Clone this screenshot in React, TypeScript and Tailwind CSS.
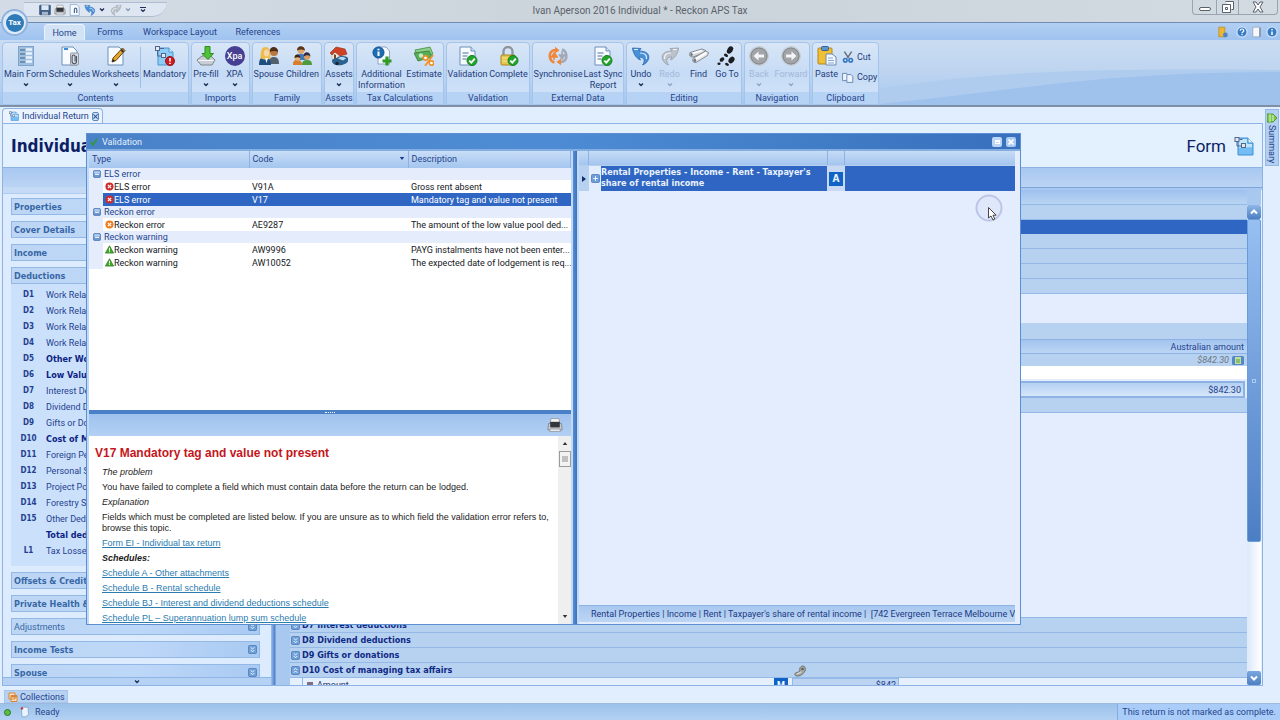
import { ReactNode } from "react";
import clsx from "clsx";

const boldFont = "font-['DejaVu_Sans_Condensed','Noto_Sans',sans-serif] font-bold";

// ---------- icons ----------

function Svg({ size = "size-5", children }: { size?: string; children: ReactNode }) {
  return (
    <svg viewBox="0 0 20 20" className={clsx(size, "shrink-0")} fill="none" aria-hidden="true">
      {children}
    </svg>
  );
}

const Page = () => <path d="M2 1h11l4 4v14H2z" fill="#f7fbff" stroke="#6d8fb8" />;

const Tick = () => (
  <>
    <circle cx="14" cy="14.5" r="5" fill="#23a52c" stroke="#15801e" />
    <path d="M11.3 14.6l2 2 3.5-4" stroke="#fff" strokeWidth="1.8" />
  </>
);

const MainFormIcon = () => (
  <Svg>
    <rect x="2.500" y=".5" width="15" height="19" fill="#9fbfe0" stroke="#7fa3cb" />
    <path d="M4 4h5M4 8h5M4 12h5M4 16h5" stroke="#40607f" strokeWidth="1.200" />
    <path d="M10 3.500h6M10 7.500h6M10 11.500h6M10 15.500h6" stroke="#e9f4ff" strokeWidth="2.500" />
  </Svg>
);
const SchedulesIcon = () => (
  <Svg>
    <Page />
    <path d="M4 3h4" stroke="#3c8bd6" strokeWidth="2" />
    <rect x="10.500" y="7" width="8" height="12" rx="1" fill="#d7dce2" stroke="#8f98a3" />
    <path d="M16.500 10v5.500a2.200 2.200 0 01-4.400 0V10.500a1.500 1.500 0 013 0v5" stroke="#4d5661" strokeWidth="1.100" />
  </Svg>
);
const WorksheetsIcon = () => (
  <Svg>
    <Page />
    <path d="M6 16l1-4L16.500 2l2.500 2.500L10 14.500z" fill="#e2a32b" stroke="#6a4510" />
    <path d="M6 16l1-3 2 2z" fill="#222" />
    <path d="M15 3.500L17.500 6" stroke="#333" strokeWidth="2" />
  </Svg>
);
const MandatoryIcon = () => (
  <Svg>
    <path d="M3 2h11l4 4v13H3z" fill="#8ccdf7" stroke="#4a93cf" />
    <path d="M14 2v4h4" fill="#e5f5ff" stroke="#4a93cf" />
    <rect x=".5" y=".5" width="4" height="4" fill="#dfe9f5" stroke="#53698a" />
    <path d="M2.500 5v5h4M5 2.500h4" stroke="#53698a" />
    <rect x="6.500" y="7.500" width="4" height="4" fill="#dfe9f5" stroke="#53698a" />
    <circle cx="15" cy="15" r="4.500" fill="#cf1b22" stroke="#9d1016" />
    <path d="M15 12v3.500M15 16.700v1.300" stroke="#fff" strokeWidth="1.600" />
  </Svg>
);
const PrefillIcon = () => (
  <Svg>
    <path d="M1 14l5-4h9l4 4-3 5H5z" fill="#c9ced4" stroke="#7e858e" />
    <path d="M2 14.500h16" stroke="#f3f5f7" />
    <path d="M9 .5h5v7h3.500L12 13.500 6 7.500h3z" fill="#4fc335" stroke="#2f8b1f" />
  </Svg>
);
const SpouseIcon = () => (
  <Svg>
    <path d="M10 18c0-5 1-7 5-7s5 3 5 7z" fill="#55606e" />
    <circle cx="15" cy="6" r="4" fill="#b87842" />
    <path d="M10.500 6c0-7 9-6 8.500 0C17 4.500 14 4.500 10.500 6z" fill="#4b2d18" />
    <path d="M0 19c0-6 2-8 6-8s6 3 6 8z" fill="#1e4f80" />
    <path d="M1.500 12C1.500 4 3 1 6.500 1s5 3 5 11c-3 2-7 2-10 0z" fill="#edbc4b" />
    <ellipse cx="7.500" cy="7" rx="2.600" ry="3.600" fill="#f7d6ad" />
    <path d="M6 12l1.500 5L9 12z" fill="#fff" />
  </Svg>
);
const ChildrenIcon = () => (
  <Svg>
    <path d="M2 13c0-4 2-5 6-5s5 2 5 6H2z" fill="#3b78bd" />
    <circle cx="8" cy="4.500" r="3.500" fill="#dba46c" />
    <path d="M4 4.500c0-6 8-5 8 0C9 3 7 3 4 4.500z" fill="#5a3413" />
    <path d="M0 19c0-4 1-5 4-5s5 1 5 5z" fill="#d87d2a" />
    <circle cx="4.500" cy="12" r="2.800" fill="#e6b37c" />
    <path d="M1.500 12c0-5 6-4 6 0-2-1-4-1-6 0z" fill="#3b2410" />
    <path d="M9 19c0-4 2-5 5-5s5 1 5 5z" fill="#4f9b3b" />
    <circle cx="14" cy="10.500" r="3.200" fill="#d99c60" />
    <path d="M10.500 10.500c0-6 7-5 7 0-3-2-4-1-7 0z" fill="#2f2a45" />
  </Svg>
);
const AssetsIcon = () => (
  <Svg>
    <path d="M3 6v7l6 2 7-3V6z" fill="#f0e6da" stroke="#b9a58c" strokeWidth=".5" />
    <path d="M1 7l6-6 9 2 2 5-7 2-5-4-3 3z" fill="#cf4225" stroke="#8c2815" strokeWidth=".6" />
    <path d="M5 8v5l2 .5V9z" fill="#6b4a2d" />
    <path d="M3 15c0-3 4-2 6-4 3-2 9-1 10 1v3c-1 3-7 5-11 4-3 0-5-2-5-4z" fill="#2b618f" />
    <path d="M9 12.500c2-2 6-2 8 0l-3 2z" fill="#b7dcf2" />
    <circle cx="8" cy="17.500" r="1.700" fill="#1b2430" />
  </Svg>
);
const InfoPlusIcon = () => (
  <Svg>
    <path d="M6 1h8l3.500 4v13H6z" fill="#f7fbff" stroke="#8ba5c4" />
    <circle cx="6.500" cy="6.500" r="5.500" fill="#1b6db5" stroke="#0f4a85" />
    <path d="M6.500 5.500v4.500M6.500 2.700v1.500" stroke="#fff" strokeWidth="2" />
    <path d="M15 10.500v9M10.500 15h9" stroke="#2f9a22" strokeWidth="3.200" />
  </Svg>
);
const EstimateIcon = () => (
  <Svg>
    <path d="M1 4l15-3 3 7-14 6z" fill="#8fce87" stroke="#3f8f43" strokeWidth=".8" />
    <path d="M0 7l15-2 3 6-14 4z" fill="#58ad58" stroke="#2f7c37" strokeWidth=".8" />
    <circle cx="7" cy="9.500" r="2.200" fill="#c9ecc0" />
    <path d="M19 9l-8 11" stroke="#ef9328" strokeWidth="1.800" />
    <circle cx="11.500" cy="12" r="2.200" fill="#fff" stroke="#ef9328" strokeWidth="1.700" />
    <circle cx="17.500" cy="17" r="2.200" fill="#fff" stroke="#ef9328" strokeWidth="1.700" />
  </Svg>
);
const DocTickIcon = () => (
  <Svg>
    <Page />
    <path d="M13 1v4h4" fill="#d6e4f4" stroke="#6d8fb8" />
    <path d="M4.500 7h6M4.500 10h5M4.500 13h4" stroke="#88a0bd" strokeWidth="1.300" />
    <Tick />
  </Svg>
);
const LockIcon = () => (
  <Svg>
    <path d="M4.500 9V5.500a4.500 4.500 0 019 0V9" stroke="#8d949c" strokeWidth="2.300" />
    <rect x="2" y="9" width="14" height="10" rx="1" fill="#e8c54d" stroke="#a98721" />
    <path d="M3 12h12M3 15h12" stroke="#f8e596" />
    <Tick />
  </Svg>
);
const SyncIcon = () => (
  <Svg>
    <path d="M8.500 4C4 3.500 1 7 2 11.500c.5 2.500 2 4.500 4.500 5" stroke="#f0863a" strokeWidth="2.600" />
    <path d="M7 .8l4.500 3.400L7 7.500z" fill="#f0863a" />
    <path d="M6 14V9.500M3.500 11L6.300 7l2.700 4z" stroke="#f0863a" strokeWidth="1.600" fill="#f0863a" />
    <path d="M12 16c4.500.5 7-3 6.200-7.500C17.700 6 16 4 14 3.500" stroke="#a3a9b5" strokeWidth="2.600" />
    <path d="M13 12.500v6.700L8.500 16z" fill="#f0863a" />
    <path d="M14 5v5M11.500 9h5.300L14 13z" stroke="#a3a9b5" strokeWidth="1.600" fill="#a3a9b5" />
  </Svg>
);
const UndoIcon = ({ size }: { size?: string }) => (
  <Svg size={size}>
    <path d="M1.500 2l8.500.5-2 2.500c7 0 11 3 9.500 8-1 3-3 5-6 6 3-4 2-8-3.500-8l1.500 3C6 13 2 8 1.500 2z" fill="#4a90d9" stroke="#2a68ad" strokeWidth=".8" />
    <path d="M3 3.500h4M9 7c5 0 7 2 6.500 6" stroke="#d8ecff" strokeWidth="1.200" />
  </Svg>
);
const RedoIcon = ({ size }: { size?: string }) => (
  <Svg size={size}>
    <path d="M18.500 2L10 2.500l2 2.500C5 5 1 8 2.500 13c1 3 3 5 6 6-3-4-2-8 3.500-8l-1.500 3c3.500-1 7.500-6 8-12z" fill="#bcc3cb" stroke="#949ca6" strokeWidth=".8" />
    <path d="M17 3.500h-4M11 7c-5 0-7 2-6.500 6" stroke="#f1f4f7" strokeWidth="1.200" />
  </Svg>
);
const FindIcon = () => (
  <Svg>
    <path d="M1 6.500L13 3l3.500 1.500L15 7 4 11c-3 0-4.500-2-3-4.500z" fill="#d7d9dc" stroke="#6f757c" strokeWidth=".8" />
    <path d="M4 12.500L16.500 5l3 1.500-1 3L7 16.500c-3 0-4-1.500-3-4z" fill="#e8e9ea" stroke="#6f757c" strokeWidth=".8" />
    <path d="M3 7.500l10-3M6.500 13L17 7" stroke="#fff" strokeWidth="1.500" />
    <ellipse cx="5.800" cy="14.300" rx="1.400" ry="1.900" fill="#767c83" />
    <ellipse cx="2.500" cy="8.500" rx="1.200" ry="1.700" fill="#767c83" />
  </Svg>
);
const GoToIcon = () => (
  <Svg>
    <g fill="#1b1d20">
      <ellipse cx="13" cy="4" rx="2.700" ry="4" transform="rotate(30 13 4)" />
      <ellipse cx="9" cy="9.300" rx="2.200" ry="1.400" transform="rotate(30 9 9.300)" />
      <ellipse cx="14.500" cy="14" rx="2.600" ry="3.600" transform="rotate(40 14.500 14)" />
      <ellipse cx="10" cy="18.300" rx="2" ry="1.300" transform="rotate(30 10 18.300)" />
      <ellipse cx="5" cy="13.500" rx="2.600" ry="1.800" transform="rotate(-40 5 13.500)" />
      <ellipse cx="2" cy="17.800" rx="1.600" ry="1.200" />
    </g>
  </Svg>
);
const NavIcon = ({ flip }: { flip?: boolean }) => (
  <Svg>
    <circle cx="10" cy="10" r="9.300" fill="#a2a5a8" stroke="#c5ccd4" strokeWidth="1.400" />
    <circle cx="10" cy="10" r="8" stroke="#85898d" />
    <path
      d={flip ? "M15.500 10L10.500 5.500V8.500H5v3h5.500v3z" : "M4.500 10L9.500 5.500V8.500H15v3H9.500v3z"}
      fill="#f4f5f6"
    />
  </Svg>
);
const PasteIcon = () => (
  <Svg>
    <rect x="1" y="2" width="14" height="16" rx="1" fill="#f0bf33" stroke="#b5861a" />
    <rect x="4.500" y=".5" width="7" height="4" rx="1" fill="#5f96cf" stroke="#345f93" />
    <path d="M9 8h6l4 3v8H9z" fill="#f4f9ff" stroke="#6a8cb5" />
    <path d="M11 12h5M11 14.500h6M11 17h6" stroke="#83a6d3" />
  </Svg>
);
const CutIcon = () => (
  <Svg size="size-3">
    <path d="M4 1l7 11M16 1L9 12" stroke="#68717d" strokeWidth="2.500" />
    <circle cx="5.500" cy="15.500" r="3" stroke="#2f72be" strokeWidth="2.500" />
    <circle cx="14.500" cy="15.500" r="3" stroke="#2f72be" strokeWidth="2.500" />
  </Svg>
);
const CopyIcon = () => (
  <Svg size="size-3">
    <path d="M1 4h7l3 3v9H1z" fill="#eef5ff" stroke="#6383ad" strokeWidth="1.500" />
    <path d="M8 6h7l3 3v10H8z" fill="#eef5ff" stroke="#6383ad" strokeWidth="1.500" />
  </Svg>
);
const FormIcon = ({ size }: { size?: string }) => (
  <Svg size={size}>
    <path d="M4 2h10l5 5v12H4z" fill="#72bdf3" stroke="#3f8fd0" />
    <path d="M5 3h8v5h5v3L5 12z" fill="#c3e5fc" />
    <path d="M14 2v5h5" fill="#e8f6ff" stroke="#3f8fd0" />
    <rect x="1" y="1.500" width="4" height="4" fill="#dfe9f5" stroke="#53698a" />
    <path d="M3 6v4h4M5.500 3.500h3" stroke="#53698a" />
    <rect x="7.500" y="7.500" width="4" height="4" fill="#dfe9f5" stroke="#53698a" />
  </Svg>
);
const PrinterIcon = ({ size = "size-4" }: { size?: string }) => (
  <Svg size={size}>
    <path d="M5 2h10l1 6H4z" fill="#f4f4f4" stroke="#8b9097" />
    <path d="M2 8h16l1 8H1z" fill="#c7cacd" stroke="#7b8087" />
    <rect x="4" y="6" width="12" height="7" fill="#33373c" />
    <path d="M4 15h12l1 3H3z" fill="#f1f2f3" stroke="#8b9097" />
  </Svg>
);
const SaveIcon = () => (
  <Svg size="size-3">
    <rect x="1" y="2" width="18" height="16" rx="1" fill="#3f5f86" stroke="#2b4566" />
    <rect x="4" y="2" width="12" height="8" fill="#dbe9f8" />
    <rect x="5" y="13" width="10" height="5" fill="#a5b6ca" />
  </Svg>
);
const SmallArrow = ({ className = "text-[#1c2f57]" }: { className?: string }) => (
  <svg viewBox="0 0 6 4" className={clsx("h-1 w-1.5 shrink-0", className)} aria-hidden="true">
    <path d="M1 .5l2 2 2-2" fill="none" stroke="currentColor" strokeWidth="1.300" />
  </svg>
);
const Collapse = ({ plus, up }: { plus?: boolean; up?: boolean }) => (
  <svg viewBox="0 0 10 10" className="size-[9px] shrink-0" aria-hidden="true">
    <rect x=".5" y=".5" width="9" height="9" rx="1.500" fill="#6f9fd8" stroke="#5480bb" />
    {plus ? (
      <path d="M2.500 5h5M5 2.500v5" stroke="#fff" />
    ) : (
      <path d={up ? "M3 4.500l2-2 2 2M3 7.500l2-2 2 2" : "M3 2.500l2 2 2-2M3 5.500l2 2 2-2"} stroke="#fff" fill="none" />
    )}
  </svg>
);
const GroupBox = () => (
  <svg viewBox="0 0 10 10" className="size-2 shrink-0" aria-hidden="true">
    <rect x=".5" y=".5" width="9" height="9" rx="2" fill="#6d97d0" stroke="#4a76b5" />
    <path d="M1.500 1.500h7v3h-7z" fill="#b2cef0" />
    <path d="M2.500 5.500h5" stroke="#fff" strokeWidth="1.200" />
  </svg>
);
const StatusIcon = ({ kind }: { kind: string }) => (
  <svg viewBox="0 0 10 10" className="size-[9px] shrink-0" aria-hidden="true">
    {kind === "warn" ? (
      <>
        <path d="M5 .8L9.600 9H.4z" fill="#43ab2c" stroke="#2c7a1e" strokeWidth=".8" />
        <path d="M5 3.200v3M5 7v1" stroke="#fff" strokeWidth="1.100" />
      </>
    ) : (
      <>
        <circle cx="5" cy="5" r="4.500" fill={kind === "els" ? "#cf2a2a" : "#ee7d1d"} />
        <path d="M3.200 3.200l3.600 3.600M6.800 3.200L3.200 6.800" stroke="#fff" strokeWidth="1.300" />
      </>
    )}
  </svg>
);

// ---------- ribbon ----------

function BigButton({ icon, label, width, arrow, disabled }: {
  icon: ReactNode; label: string; width: string; arrow?: boolean; disabled?: boolean;
}) {
  return (
    <button
      type="button"
      disabled={disabled}
      className={clsx("flex shrink-0 flex-col items-center pt-[3px]", width, disabled ? "text-[#a3b9da]" : "text-[#1e3c7b]")}
    >
      {icon}
      <span className="mt-[3px] whitespace-pre text-center leading-[11px]">{label}</span>
      {arrow && <SmallArrow className={clsx("mt-[3px]", disabled ? "text-[#8fa5c6]" : "text-[#1c2f57]")} />}
    </button>
  );
}

function Group({ title, width, children }: { title: string; width: string; children: ReactNode }) {
  return (
    <section
      className={clsx(
        "relative flex h-[63px] shrink-0 flex-col rounded-sm border border-[#a5c4ec] bg-linear-to-b from-[#d8e6f7] via-[#c6dbf5] to-[#d3e5fa]",
        width,
      )}
    >
      <div className="flex flex-1 overflow-hidden">{children}</div>
      <h3 className="h-3 bg-[#b6d2f4] text-center leading-3 text-[#24448c]">{title}</h3>
    </section>
  );
}

function Ribbon() {
  return (
    <div className="relative flex h-[67px] gap-0.5 border-b-2 border-[#7f8fa5] bg-linear-to-b from-[#cadcf1] via-[#bdd4f0] to-[#a5c8f0] pt-0.5 pl-0.5">
      <svg viewBox="0 0 400 65" preserveAspectRatio="none" className="absolute inset-y-0 right-0 h-full w-[400px]" aria-hidden="true">
        <path d="M0 49C100 32 200 28 400 30V65H0z" fill="#afccef" />
        <path d="M0 64C140 50 220 32 400 32V65H0z" fill="#9fc2ec" />
      </svg>
      <Group title="Contents" width="w-[187px]">
        <BigButton icon={<MainFormIcon />} label="Main Form" width="w-[45px]" arrow />
        <BigButton icon={<SchedulesIcon />} label="Schedules" width="w-[43px]" arrow />
        <BigButton icon={<WorksheetsIcon />} label="Worksheets" width="w-[49px]" arrow />
        <span className="my-1 w-px bg-[#a0bfe8]" />
        <BigButton icon={<MandatoryIcon />} label="Mandatory" width="w-[47px]" />
      </Group>
      <Group title="Imports" width="w-[59px]">
        <BigButton icon={<PrefillIcon />} label="Pre-fill" width="w-[28px]" arrow />
        <BigButton
          icon={
            <span className="grid size-5 place-items-center rounded-full bg-[#463f92] text-[9px] leading-none font-medium text-white">
              Xpa
            </span>
          }
          label="XPA"
          width="w-[29px]"
          arrow
        />
      </Group>
      <Group title="Family" width="w-[70px]">
        <BigButton icon={<SpouseIcon />} label="Spouse" width="w-[31px]" />
        <BigButton icon={<ChildrenIcon />} label="Children" width="w-[37px]" />
      </Group>
      <Group title="Assets" width="w-[30px]">
        <BigButton icon={<AssetsIcon />} label="Assets" width="w-[28px]" arrow />
      </Group>
      <Group title="Tax Calculations" width="w-[88px]">
        <BigButton icon={<InfoPlusIcon />} label={"Additional\nInformation"} width="w-[49px]" />
        <BigButton icon={<EstimateIcon />} label="Estimate" width="w-[36px]" />
      </Group>
      <Group title="Validation" width="w-[84px]">
        <BigButton icon={<DocTickIcon />} label="Validation" width="w-[41px]" />
        <BigButton icon={<LockIcon />} label="Complete" width="w-[41px]" />
      </Group>
      <Group title="External Data" width="w-[92px]">
        <BigButton icon={<SyncIcon />} label="Synchronise" width="w-[50px]" />
        <BigButton icon={<DocTickIcon />} label={"Last Sync\nReport"} width="w-[40px]" />
      </Group>
      <Group title="Editing" width="w-[116px]">
        <BigButton icon={<UndoIcon />} label="Undo" width="w-[28px]" arrow />
        <BigButton icon={<RedoIcon />} label="Redo" width="w-[29px]" arrow disabled />
        <BigButton icon={<FindIcon />} label="Find" width="w-[29px]" />
        <BigButton icon={<GoToIcon />} label="Go To" width="w-[28px]" />
      </Group>
      <Group title="Navigation" width="w-[66px]">
        <BigButton icon={<NavIcon />} label="Back" width="w-[28px]" arrow disabled />
        <BigButton icon={<NavIcon flip />} label="Forward" width="w-[36px]" arrow disabled />
      </Group>
      <Group title="Clipboard" width="w-[67px]">
        <BigButton icon={<PasteIcon />} label="Paste" width="w-[27px]" />
        <div className="flex flex-col gap-2 pt-2 pl-0.5 text-[#1e3c7b]">
          <button type="button" className="flex h-3 items-center gap-[3px]"><CutIcon />Cut</button>
          <button type="button" className="flex h-3 items-center gap-[3px]"><CopyIcon />Copy</button>
        </div>
      </Group>
    </div>
  );
}

function TitleBar() {
  return (
    <header className="relative flex h-[22px] items-start justify-center bg-linear-to-r from-[#d3dce6] via-[#cbd3da] to-[#d2dae2]">
      <div className="absolute top-0.5 left-6 flex h-[15px] w-[143px] items-center gap-[3px] rounded-br-full border-y border-[#aebdd0] bg-[#dde6f1] pl-[15px]">
        <button type="button" aria-label="Save"><SaveIcon /></button>
        <button type="button" aria-label="Print"><PrinterIcon size="size-3" /></button>
        <button type="button" aria-label="Attachments"><Svg size="size-3"><Page /><path d="M9 15V9a2 2 0 014 0v6" stroke="#53698a" strokeWidth="2" /></Svg></button>
        <button type="button" aria-label="Undo"><UndoIcon size="size-3" /></button>
        <SmallArrow />
        <button type="button" aria-label="Redo" className="ml-0.5"><RedoIcon size="size-3" /></button>
        <SmallArrow className="text-[#8d9bb0]" />
        <svg viewBox="0 0 6 6" className="ml-1.5 size-1.5 text-[#1c2f57]"><path d="M0 .5h6M1 2.500l2 2 2-2" fill="none" stroke="currentColor" strokeWidth="1.200" /></svg>
      </div>
      <h1 className="pt-1 text-[10px] leading-[14px] text-[#5a626b]">Ivan Aperson 2016 Individual * - Reckon APS Tax</h1>
      <div className="absolute top-0 right-0.5 flex h-[15px] rounded-b border border-t-0 border-[#9aa4b0] text-[#59616c]">
        <button type="button" aria-label="Minimise" className="grid w-6 place-items-center border-r border-[#9aa4b0]">
          <span className="mt-1 h-1 w-3 rounded-sm border border-[#59616c] bg-white" />
        </button>
        <button type="button" aria-label="Restore" className="grid w-[22px] place-items-center border-r border-[#9aa4b0]">
          <svg viewBox="0 0 12 12" className="size-3"><path d="M3.500.5h8v8h-2M.5 3.500h8v8h-8zM3.500 6.500h2v2h-2z" fill="#fff" stroke="currentColor" /></svg>
        </button>
        <button type="button" aria-label="Close" className="grid w-[38px] place-items-center">
          <svg viewBox="0 0 12 12" className="size-3"><path d="M1 1h3l2 3 2-3h3L8 6l3 5H8L6 8l-2 3H1l3-5z" fill="#fff" stroke="currentColor" /></svg>
        </button>
      </div>
    </header>
  );
}

function TabBar() {
  const tab = "h-full whitespace-nowrap text-center text-[#24448c]";
  return (
    <nav className="flex h-[18px] items-end justify-between border-t border-[#6f8db3] bg-linear-to-b from-[#b3cff2] to-[#9fc3f0] pr-0.5 pl-11">
      <div className="flex h-4 items-center">
        <button type="button" className="h-full w-[41px] rounded-t-sm border border-b-0 border-[#e8f2fd] bg-[#d3e3f6] text-[#24448c]">Home</button>
        <button type="button" className={clsx(tab, "w-[50px]")}>Forms</button>
        <button type="button" className={clsx(tab, "w-[90px]")}>Workspace Layout</button>
        <button type="button" className={clsx(tab, "w-[66px]")}>References</button>
      </div>
      <div className="flex items-center gap-[3px] pb-0.5">
        <button type="button" aria-label="Guide"><Svg size="size-3"><path d="M3 2h10v16H3z" fill="#eeb531" stroke="#b07f17" /><circle cx="14" cy="15" r="4" fill="#4b86c9" /></Svg></button>
        <button type="button" aria-label="Help" className="ml-1"><Svg size="size-3"><circle cx="10" cy="10" r="8.500" fill="#3a7cc4" stroke="#cfe3fa" strokeWidth="2" /><path d="M7 8c0-4 6-4 6 0 0 2-3 2-3 4M10 13.500v2" stroke="#fff" strokeWidth="2" /></Svg></button>
        <button type="button" aria-label="Notes"><Svg size="size-3"><path d="M3 2h12v16H3z" fill="#f6f8fb" stroke="#8796ab" /><path d="M15 3v15" stroke="#8796ab" strokeWidth="3" /></Svg></button>
        <button type="button" aria-label="About"><Svg size="size-3"><circle cx="10" cy="10" r="8.500" fill="#3a7cc4" stroke="#cfe3fa" strokeWidth="2" /><path d="M10 9v6M10 5v2" stroke="#fff" strokeWidth="2.500" /></Svg></button>
      </div>
    </nav>
  );
}

// ---------- sidebar ----------

const deductions = [
  ["D1", "Work Related Car"],
  ["D2", "Work Related Travel"],
  ["D3", "Work Related Clothing"],
  ["D4", "Work Related Education"],
  ["D5", "Other Work Related", "b"],
  ["D6", "Low Value Pool", "b"],
  ["D7", "Interest Deductions"],
  ["D8", "Dividend Deductions"],
  ["D9", "Gifts or Donations"],
  ["D10", "Cost of Managing Tax", "b"],
  ["D11", "Foreign Pension"],
  ["D12", "Personal Super"],
  ["D13", "Project Pool"],
  ["D14", "Forestry Scheme"],
  ["D15", "Other Deductions"],
  ["", "Total deductions", "b"],
  ["L1", "Tax Losses"],
];

function Section({ title, plain, children }: { title: string; plain?: boolean; children?: ReactNode }) {
  return (
    <div>
      <button
        type="button"
        className={clsx(
          "flex h-[17px] w-full items-center justify-between border border-[#94b8e6] bg-linear-to-r from-[#bdd6f4] via-[#bdd7f8] to-[#a9caf2] pr-0.5 pl-0.5 text-[#3767a6]",
          !plain && boldFont,
        )}
      >
        {title}
        <Collapse />
      </button>
      {children}
    </div>
  );
}

function Sidebar() {
  return (
    <aside className="flex w-[268px] shrink-0 flex-col bg-[#dcebfd]">
      <div className="h-[7px] shrink-0 border-b border-[#b0cbee] bg-[#c4daf5]" />
      <div className="flex min-h-0 flex-1 flex-col gap-1.5 overflow-hidden pt-1 pr-[11px] pl-2">
        <Section title="Properties" />
        <Section title="Cover Details" />
        <Section title="Income" />
        <Section title="Deductions">
          <ul className="bg-[#cbe0fb] pt-[3px] pb-[7px] text-[#1f4090]">
            {deductions.map(([code, name, bold], i) => (
              <li key={i} className="flex h-4 items-center whitespace-nowrap">
                <span className={clsx("w-[35px] text-center text-[8px]", boldFont)}>{code}</span>
                <span className={clsx(bold && [boldFont, "text-[#0b2484]"])}>{name}</span>
              </li>
            ))}
          </ul>
        </Section>
        <Section title="Offsets & Credits" />
        <Section title="Private Health & Medicare" />
        <Section title="Adjustments" plain />
        <Section title="Income Tests" />
        <Section title="Spouse" />
      </div>
      <button type="button" aria-label="More" className="grid h-2 shrink-0 place-items-center border-t border-[#8fb5e6] bg-[#b5d2f5]">
        <SmallArrow />
      </button>
    </aside>
  );
}

// ---------- form behind the window ----------

function FormRow({ title, up }: { title: string; up?: boolean }) {
  return (
    <div className={clsx("flex h-[15px] items-center gap-0.5 border-b border-[#94b9e6] bg-[#b7d1f0] pl-px text-[#0f2a86]", boldFont)}>
      <Collapse up={up} />
      {title}
    </div>
  );
}

function FormGrid() {
  const bar = "h-[15px] shrink-0 border-b border-[#94b9e6] bg-[#b7d1f0]";
  return (
    <main className="flex min-w-0 flex-1 border-t border-l border-[#7da4db] bg-[#a9c8ef] pt-0.5 pl-3.5">
      <div className="flex min-w-0 flex-1 flex-col overflow-hidden bg-[#e3edfe] text-[#1f3f8f]">
        <div className="h-[15px] shrink-0 border-b border-[#94b9e6] bg-linear-to-b from-[#9fc1ee] to-[#bad4f3]" />
        <div className={bar} />
        <div className="h-[14px] shrink-0 bg-[#2f66c3]" />
        <div className={bar} />
        <div className={bar} />
        <div className={bar} />
        <div className={bar} />
        <div className="h-[29px] shrink-0" />
        <div className="h-4 shrink-0 bg-[#b7d1f0]" />
        <div className="flex h-[15px] shrink-0 items-center justify-end border-y border-[#8db2e3] bg-linear-to-b from-[#a3c4ef] to-[#bbd5f4] pr-[3px]">
          Australian amount
        </div>
        <div className="flex h-3 shrink-0 items-center justify-end gap-[3px] bg-[#b7d1f0] pr-[3px] text-[#6c7784] italic">
          $842.30
          <svg viewBox="0 0 12 9" className="h-[9px] w-3"><rect width="12" height="9" rx="1.500" fill="#5688c9" /><rect x="3" y="1" width="6" height="7" fill="#bfe09a" /><path d="M4 4h4M4 6h4" stroke="#5c9d3e" /></svg>
        </div>
        <div className="h-[13px] shrink-0 bg-white" />
        <div className="mt-0.5 mr-0.5 flex h-[17px] shrink-0 items-center justify-end border-2 border-[#8db2e3] bg-linear-to-b from-[#b4d0f3] to-[#d7e6f9] pr-0.5">
          $842.30
        </div>
        <div className="h-[15px] shrink-0 border-b border-[#94b9e6] bg-[#b7d1f0]" />
        <div className="min-h-0 flex-1" />
        <div className="shrink-0 border-t border-[#94b9e6]">
          <FormRow title="D7 Interest deductions" />
          <FormRow title="D8 Dividend deductions" />
          <FormRow title="D9 Gifts or donations" />
          <div className="relative">
            <FormRow title="D10 Cost of managing tax affairs" up />
            <svg viewBox="0 0 12 12" className="absolute top-0.5 left-[504px] size-3" aria-hidden="true">
              <path d="M1 10c-1-3 3-2 5-4-1-3 1-5 3-5s3 3 2 5-4 5-7 5-2 0-3-1z" fill="#a9ada8" stroke="#6c706c" />
              <circle cx="8.500" cy="4" r="1.300" fill="#5b5f5b" />
              <path d="M3 9l4-2" stroke="#e3e5e3" />
            </svg>
          </div>
        </div>
        <div className="flex h-[7px] shrink-0 overflow-hidden bg-[#e6f0fd] pl-3">
          <div className="flex w-[472px] gap-1 border-l border-[#94b9e6] pt-0.5 pl-1 leading-[11px] text-[#263b66]">
            <span className="mt-0.5 h-1 w-1.5 bg-[#7d6f87]" />
            Amount
          </div>
          <span className="h-[15px] w-3.5 bg-[#0f62c6] text-center leading-[15px] font-bold text-white">M</span>
          <span className="ml-1 h-[15px] w-[107px] border border-[#94b9e6] bg-[#bcd4f2] pr-0.5 text-right leading-[13px]">$842</span>
        </div>
      </div>
      <div className="mt-[15px] flex w-[14px] shrink-0 flex-col bg-linear-to-r from-[#dbe9fa] to-white">
        <button type="button" aria-label="Scroll up" className="grid h-3.5 place-items-center rounded-xs bg-linear-to-b from-[#8fb6e8] to-[#4d7fc2]">
          <svg viewBox="0 0 8 6" className="h-1.5 w-2"><path d="M1 4.500l3-3 3 3" fill="none" stroke="#fff" strokeWidth="2" /></svg>
        </button>
        <div className="grid h-[323px] place-items-center rounded-xs border border-[#6a9bdb] bg-linear-to-b from-[#97c0f2] to-[#4c7ec4]">
          <span className="size-1 border border-[#a9cbf3]" />
        </div>
        <div className="flex-1" />
        <button type="button" aria-label="Scroll down" className="grid h-3.5 place-items-center rounded-xs bg-linear-to-b from-[#7ba7e0] to-[#4d7fc2]">
          <svg viewBox="0 0 8 6" className="h-1.5 w-2"><path d="M1 1.500l3 3 3-3" fill="none" stroke="#fff" strokeWidth="2" /></svg>
        </button>
      </div>
      <div className="w-px bg-[#e3f0fd]" />
    </main>
  );
}

// ---------- validation window ----------

const groups = [
  {
    name: "ELS error",
    kind: "els",
    rows: [
      { code: "V91A", text: "Gross rent absent" },
      { code: "V17", text: "Mandatory tag and value not present", selected: true },
    ],
  },
  {
    name: "Reckon error",
    kind: "reckon",
    rows: [{ code: "AE9287", text: "The amount of the low value pool ded..." }],
  },
  {
    name: "Reckon warning",
    kind: "warn",
    rows: [
      { code: "AW9996", text: "PAYG instalments have not been enter..." },
      { code: "AW10052", text: "The expected date of lodgement is req..." },
    ],
  },
];

function ErrorTable() {
  const th = "h-[17px] border-r border-[#8db2e3] p-0 pb-0.5 pl-[3px] text-left font-normal";
  return (
    <table className="w-full table-fixed border-collapse text-left whitespace-nowrap">
      <thead>
        <tr className="bg-linear-to-b from-[#c9def7] to-[#a4c5ef] text-[#24448c]">
          <th className={clsx(th, "w-[160px]")}>Type</th>
          <th className={clsx(th, "w-[159px]")}>
            <span className="flex items-center justify-between pr-[3px]">
              Code
              <svg viewBox="0 0 6 4" className="h-[3px] w-1.5"><path d="M0 0h6L3 4z" fill="#1a3a86" /></svg>
            </span>
          </th>
          <th className={th}>Description</th>
        </tr>
      </thead>
      {groups.map((g) => (
        <tbody key={g.name}>
          <tr className="bg-[#e5edfc] text-[#24448c]">
            <td colSpan={3} className="h-3 p-0">
              <span className="flex h-3 items-center gap-[3px] pl-1 leading-3"><GroupBox />{g.name}</span>
            </td>
          </tr>
          {g.rows.map((r: any) => (
            <tr key={r.code} className={r.selected ? "bg-[#2f66c3] text-white" : "text-[#15181d]"}>
              <td className="h-[13px] p-0">
                <span className="flex h-[13px] items-center leading-3">
                  <span className="h-full w-3.5 bg-[#e5edfc]" />
                  <span className="w-0.5" />
                  <StatusIcon kind={g.kind} />
                  {g.name}
                </span>
              </td>
              <td className="p-0 pl-[3px] leading-3">{r.code}</td>
              <td className="overflow-hidden p-0 pl-[3px] leading-3">{r.text}</td>
            </tr>
          ))}
        </tbody>
      ))}
    </table>
  );
}

function HelpText() {
  const link = "block w-fit text-[#2c7cb0] underline";
  return (
    <div className="flex h-[188px] bg-white font-['Liberation_Sans',Arial,sans-serif]">
      <article className="min-w-0 flex-1 overflow-hidden pl-1.5 text-[9px] leading-[11px] text-[#1c1c1c]">
        <h2 className="pt-[9px] text-[12px] leading-4 font-bold text-[#c4161c]">V17 Mandatory tag and value not present</h2>
        <div className="flex flex-col gap-1 pt-1.5 pl-[7px]">
          <p className="italic">The problem</p>
          <p>You have failed to complete a field which must contain data before the return can be lodged.</p>
          <p className="italic">Explanation</p>
          <p>Fields which must be completed are listed below. If you are unsure as to which field the validation error refers to, browse this topic.</p>
          <a href="#form-ei" className={link}>Form EI - Individual tax return</a>
          <p className="font-bold italic">Schedules:</p>
          <a href="#schedule-a" className={link}>Schedule A - Other attachments</a>
          <a href="#schedule-b" className={link}>Schedule B - Rental schedule</a>
          <a href="#schedule-bj" className={link}>Schedule BJ - Interest and dividend deductions schedule</a>
          <a href="#schedule-pl" className={link}>Schedule PL – Superannuation lump sum schedule</a>
        </div>
      </article>
      <div className="flex w-[13px] shrink-0 flex-col items-center justify-between bg-[#efefef] py-1">
        <div className="flex flex-col items-center gap-1.5">
          <svg viewBox="0 0 6 4" className="mt-0.5 h-[3px] w-1.5"><path d="M0 4h6L3 0z" fill="#333" /></svg>
          <span className="grid h-4 w-3 place-items-center border border-[#9b9b9b] bg-[#f2f2f2]">
            <svg viewBox="0 0 6 6" className="size-1.5"><path d="M0 1h6M0 3h6M0 5h6" stroke="#777" strokeWidth=".8" /></svg>
          </span>
        </div>
        <svg viewBox="0 0 6 4" className="mb-0.5 h-[3px] w-1.5"><path d="M0 0h6L3 4z" fill="#333" /></svg>
      </div>
    </div>
  );
}

function ValidationWindow() {
  return (
    <section className="absolute top-[133px] left-[86px] flex h-[492px] w-[935px] flex-col border border-[#5b8fd2] bg-[#c0d9f6]">
      <div className="flex h-[15px] shrink-0 items-center gap-1 bg-linear-to-r from-[#4a82c8] via-[#4d8cd4] to-[#3870bd] pr-1 pl-[3px] text-white">
        <svg viewBox="0 0 8 8" className="size-2"><path d="M1 4l2 3 4-6" fill="none" stroke="#2f9a3a" strokeWidth="1.600" /></svg>
        <h2 className="flex-1 text-[#e3effc]">Validation</h2>
        <button type="button" aria-label="Maximise" className="grid size-[10px] place-items-center rounded-xs bg-[#bcd7f6]">
          <span className="h-1 w-[5px] border border-t-2 border-white" />
        </button>
        <button type="button" aria-label="Close" className="grid size-[10px] place-items-center rounded-xs bg-[#a9caf1]">
          <svg viewBox="0 0 6 6" className="size-1.5"><path d="M.5.5l5 5M5.500.5l-5 5" stroke="#fff" strokeWidth="1.600" /></svg>
        </button>
      </div>
      <div className="flex min-h-0 flex-1 border-t-2 border-[#84ade0] pl-0.5">
        <div className="flex w-[482px] shrink-0 flex-col">
          <div className="min-h-0 flex-1 bg-white">
            <ErrorTable />
          </div>
          <div className="grid h-1 shrink-0 place-items-center bg-[#4a80c8]">
            <span className="h-px w-2.5 border-t border-dotted border-white" />
          </div>
          <div className="flex h-[22px] shrink-0 items-center justify-end bg-linear-to-b from-[#9fc2ee] to-[#b3d0f4] pr-2">
            <button type="button" aria-label="Print"><PrinterIcon /></button>
          </div>
          <HelpText />
        </div>
        <div className="mx-0.5 w-1 shrink-0 bg-linear-to-r from-[#5a8ed2] to-[#3c71bd]" />
        <div className="flex min-w-0 flex-1 flex-col bg-[#e3edfe] pr-[5px]">
          <div className="flex h-[15px] shrink-0 border-b border-[#b5cef0] bg-linear-to-b from-[#c6dcf6] to-[#a4c5ef]">
            <span className="w-2.5 border-r border-[#8db2e3]" />
            <span className="flex-1" />
            <span className="w-[18px] border-x border-[#8db2e3]" />
            <span className="w-[170px]" />
          </div>
          <div className={clsx("flex h-[25px] shrink-0 text-[#e9f2fd]", boldFont)}>
            <span className="grid w-2.5 place-items-center bg-[#b7d1f0]">
              <svg viewBox="0 0 4 6" className="h-1.5 w-1"><path d="M0 0v6l4-3z" fill="#122c6e" /></svg>
            </span>
            <span className="grid w-3 place-items-center"><Collapse plus /></span>
            <p className="min-w-0 flex-1 bg-[#2f66c3] pt-px leading-[11px]">
              Rental Properties - Income - Rent - Taxpayer's
              <br />
              share of rental income
            </p>
            <span className="grid w-[18px] place-items-center bg-[#c9d9f3]">
              <span className="grid size-3.5 place-items-center bg-[#0f62c6] text-[10px] leading-none">A</span>
            </span>
            <span className="w-[170px] bg-[#2f66c3]" />
          </div>
          <div className="flex-1" />
          <footer className="mb-0.5 h-[17px] shrink-0 overflow-hidden border-t border-[#8db2e3] bg-linear-to-b from-[#a8c8f0] to-[#bdd5f3] pl-3 leading-4 whitespace-pre text-[#1c3a84]">
            Rental Properties | Income | Rent | Taxpayer's share of rental income |  [742 Evergreen Terrace Melbourne VIC
          </footer>
        </div>
      </div>
    </section>
  );
}

export default function App() {
  return (
    <div className="relative flex h-screen flex-col overflow-hidden bg-[#e0eefd] font-[Roboto,'Noto_Sans',sans-serif] text-[9px] leading-3">
      <TitleBar />
      <TabBar />
      <button
        type="button"
        className="absolute top-[9px] left-px grid size-[27px] place-items-center rounded-full border-2 border-[#8fb3df] bg-[#dbe9f8]"
      >
        <span className="grid size-[18px] place-items-center rounded-full bg-[#2f7ab8] text-[8px] leading-none font-bold text-white">Tax</span>
      </button>
      <Ribbon />

      <div className="flex min-h-0 flex-1 pl-0.5">
        <div className="flex min-w-0 flex-1 flex-col">
          <div className="flex h-4 shrink-0 items-end">
            <div className="flex h-[15px] w-[101px] items-center gap-[3px] rounded-t-sm border border-b-0 border-[#8db2e3] bg-[#eaf3fe] pr-[3px] pl-1.5 whitespace-nowrap text-[#24448c]">
              <FormIcon size="size-2.5" />
              <span className="flex-1">Individual Return</span>
              <button type="button" aria-label="Close tab" className="grid size-[9px] place-items-center rounded-xs border border-[#5b84bb] bg-[#d3e4f9]">
                <svg viewBox="0 0 6 6" className="size-[5px]"><path d="M.5.5l5 5M5.500.5l-5 5" stroke="#2f5fa5" strokeWidth="1.400" /></svg>
              </button>
            </div>
          </div>
          <div className="flex min-h-0 flex-1 flex-col border border-[#8db2e3]">
            <div className="flex h-[43px] shrink-0 items-center justify-between bg-[#e3f0fe] pr-2 pl-2 text-[17px] leading-5 text-[#0c1f66]">
              <h2 className={boldFont}>Individual Return</h2>
              <span className="flex items-center gap-2">Form<FormIcon size="size-5" /></span>
            </div>
            <div className="h-5 shrink-0 border-t border-[#8db2e3] bg-linear-to-b from-[#a8c8f0] to-[#bad4f4]" />
            <div className="flex min-h-0 flex-1">
              <Sidebar />
              <div className="w-1 shrink-0 bg-linear-to-r from-[#9dc0ee] to-[#4a7dc6]" />
              <FormGrid />
            </div>
          </div>
        </div>
        <div className="w-[17px] shrink-0 pt-0.5 pl-0.5">
          <button
            type="button"
            className="flex h-[57px] w-3.5 items-center gap-0.5 border border-[#94b9e6] bg-[#b3d0f3] pt-[3px] text-[#24448c] [writing-mode:vertical-rl]"
          >
            <svg viewBox="0 0 10 10" className="size-2.5 shrink-0"><path d="M0 1h6l4 4-4 4H0z" fill="#7cc64c" stroke="#4b9a2a" /><path d="M3 1v8M6 2v6" stroke="#e2f5d2" /></svg>
            Summary
          </button>
        </div>
      </div>

      <div className="flex h-[17px] shrink-0 items-end pl-1">
        <button type="button" className="flex h-[13px] items-center gap-0.5 border border-[#a5c5ee] bg-[#b7d1f3] pr-0.5 pl-[3px] text-[#24448c]">
          <svg viewBox="0 0 10 10" className="size-2.5 shrink-0"><path d="M1 1h6v6H1zM3 3.500h6v6H3z" fill="#f7e2c6" stroke="#d98634" /><path d="M3 4.500h6" stroke="#d98634" strokeWidth="2" /></svg>
          Collections
        </button>
      </div>
      <footer className="flex h-[17px] shrink-0 items-center justify-between border-t border-[#9db9dc] bg-linear-to-b from-[#9cc2ea] to-[#b4d1f3] text-[#24448c]">
        <div className="flex items-center gap-2 pl-1">
          <span className="size-[7px] rounded-full border border-[#2b7a26] bg-[#5cba45]" />
          <span className="flex items-center gap-1">
            <Svg size="size-3"><path d="M4 2h11l1 12-5 4H5z" fill="#eaf4ff" stroke="#6c8fbe" /><circle cx="5" cy="4" r="2" fill="#c83030" /></Svg>
            Ready
          </span>
        </div>
        <span className="flex h-full items-center border-l border-[#86addd] bg-[#a9cdf8] px-1">This return is not marked as complete.</span>
      </footer>

      <ValidationWindow />

      {/* pointer with click ring */}
      <svg viewBox="0 0 28 28" className="pointer-events-none absolute top-[194px] left-[975px] size-7" aria-hidden="true">
        <circle cx="14" cy="14" r="12.500" fill="#dfe7fb" stroke="#bcc5e6" strokeWidth="2" />
        <path d="M13.500 13.500v10.500l2.500-2 2 4 1.800-1-1.800-3.800h3.200z" fill="#fff" stroke="#333" strokeWidth=".9" />
      </svg>
    </div>
  );
}
